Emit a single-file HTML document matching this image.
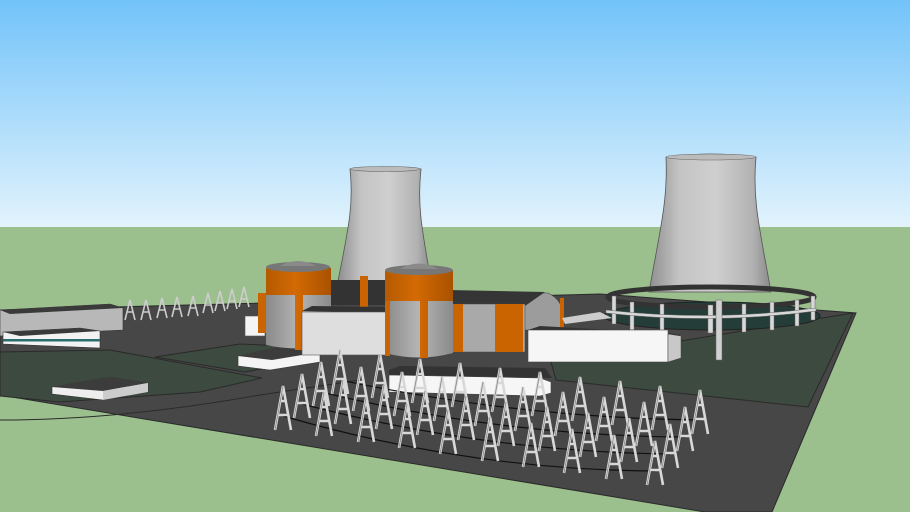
<!DOCTYPE html>
<html><head><meta charset="utf-8"><style>html,body{margin:0;padding:0;overflow:hidden}svg{display:block}</style></head>
<body>
<svg width="910" height="512" viewBox="0 0 910 512" xmlns="http://www.w3.org/2000/svg">
<defs>
<linearGradient id="sky" x1="0" y1="0" x2="0" y2="1"><stop offset="0" stop-color="#72c3fa"/><stop offset="1" stop-color="#e2f3fc"/></linearGradient>
<linearGradient id="tw" x1="0" y1="0" x2="1" y2="0"><stop offset="0" stop-color="#8e8e8e"/><stop offset="0.25" stop-color="#c4c4c4"/><stop offset="0.55" stop-color="#cfcfcf"/><stop offset="0.85" stop-color="#b2b2b2"/><stop offset="1" stop-color="#888"/></linearGradient>
<linearGradient id="cy" x1="0" y1="0" x2="1" y2="0"><stop offset="0" stop-color="#8a8a8a"/><stop offset="0.5" stop-color="#b5b5b5"/><stop offset="1" stop-color="#8a8a8a"/></linearGradient>
<linearGradient id="or" x1="0" y1="0" x2="1" y2="0"><stop offset="0" stop-color="#b45a00"/><stop offset="0.45" stop-color="#d46a04"/><stop offset="1" stop-color="#a85200"/></linearGradient>
<g id="py"><path d="M-8,0 L0,-44 L8,0 M-5,-15 L5,-15 M-2,-29 L2,-29" stroke="#d8d8d8" stroke-width="2.6" fill="none"/><path d="M-8,0 L0,-44" stroke="#8a8a8a" stroke-width="0.8" fill="none"/></g>
<g id="ps"><path d="M-5,0 L0,-20 L5,0 M-3,-8 L3,-8" stroke="#ccc" stroke-width="1.6" fill="none"/></g>
</defs>
<rect width="910" height="227" fill="url(#sky)"/>
<rect y="227" width="910" height="285" fill="#9bc08e"/>
<!-- slab -->
<polygon points="0,310 600,294 856,313 772,512 705,512 0,395" fill="#474747" stroke="#2a2a2a" stroke-width="1"/>
<polygon points="0,352 110,350 262,378 200,392 60,402 0,396" fill="#3d4a3f" stroke="#2a2a2a"/>
<polygon points="155,357 240,344 330,348 300,362 245,372" fill="#3d4a3f" stroke="#2a2a2a"/>
<polygon points="551,362 853,313 808,407 556,380" fill="#3d4a3f" stroke="#2a2a2a"/>
<path d="M0,420 Q120,420 260,395 L360,380" stroke="#2a2a2a" fill="none"/>
<!-- back pylons -->
<g>
<use href="#ps" x="130" y="320"/><use href="#ps" x="146" y="320"/><use href="#ps" x="162" y="318"/><use href="#ps" x="177" y="317"/><use href="#ps" x="193" y="316"/><use href="#ps" x="208" y="313"/><use href="#ps" x="220" y="311"/><use href="#ps" x="232" y="309"/><use href="#ps" x="244" y="307"/>
</g>
<!-- right cooling tower platform -->
<ellipse cx="712" cy="316" rx="108" ry="14" fill="#253d38" stroke="#222"/>
<path d="M649,292 C660,230 668,200 666,157 Q711,151 756,157 C752,200 760,230 771,292 Z" fill="url(#tw)" stroke="#555" stroke-width="0.8"/>
<ellipse cx="711" cy="157" rx="45" ry="3" fill="#bbb" stroke="#666" stroke-width="0.6"/>
<ellipse cx="711" cy="297" rx="103" ry="10" fill="none" stroke="#333" stroke-width="5"/>
<g fill="#d8d8d8" stroke="#666" stroke-width="0.5">
<rect x="612" y="296" width="4" height="28"/><rect x="630" y="302" width="4" height="28"/><rect x="660" y="304" width="4" height="28"/><rect x="708" y="305" width="5" height="28"/><rect x="742" y="304" width="4" height="28"/><rect x="770" y="302" width="4" height="28"/><rect x="795" y="300" width="4" height="26"/><rect x="811" y="296" width="4" height="24"/>
<path d="M606,310 Q711,322 816,308 L816,311 Q711,325 606,313 Z"/>
</g>
<rect x="716" y="300" width="6" height="60" fill="#d0d0d0" stroke="#666" stroke-width="0.5"/>
<!-- left cooling tower -->
<path d="M338,281 C348,230 354,205 350,169 Q385,165 421,169 C417,205 422,230 431,281 Z" fill="url(#tw)" stroke="#555" stroke-width="0.8"/>
<ellipse cx="385" cy="169" rx="35" ry="2.5" fill="#bbb" stroke="#666" stroke-width="0.6"/>
<!-- left buildings -->
<polygon points="0,310 110,304 123,308 123,330 0,336" fill="#b8b8b8" stroke="#333" stroke-width="0.6"/>
<polygon points="0,310 110,304 123,308 10,314" fill="#3a3a3a"/>
<polygon points="3,332 80,328 100,331 100,348 3,344" fill="#f2f2f2" stroke="#333" stroke-width="0.6"/>
<polygon points="3,332 80,328 100,331 20,336" fill="#3a3a3a"/>
<rect x="3" y="339" width="97" height="2.5" fill="#2b6c6c"/>
<polygon points="52,387 110,377 148,383 148,392 103,400 52,394" fill="#eee" stroke="#333" stroke-width="0.6"/>
<polygon points="52,387 110,377 148,383 103,391" fill="#3c3c3c"/>
<polygon points="103,391 148,383 148,392 103,400" fill="#ccc"/>
<!-- small building near reactor -->
<polygon points="238,356 285,346 320,352 320,362 270,370 238,366" fill="#f4f4f4" stroke="#333" stroke-width="0.6"/>
<polygon points="238,356 285,346 320,352 272,360" fill="#3c3c3c"/>
<rect x="245" y="316" width="20" height="20" fill="#f4f4f4" stroke="#555" stroke-width="0.6"/>
<!-- reactor complex -->
<rect x="330" y="280" width="60" height="25" fill="#333"/>
<rect x="258" y="293" width="12" height="40" fill="#c96400"/>
<path d="M266,268 Q298,258 331,268 L331,345 Q298,352 266,345 Z" fill="url(#cy)"/>
<path d="M266,268 Q298,258 331,268 L331,295 L303,295 L303,350 L295,350 L295,295 L266,295 Z" fill="url(#or)"/>
<ellipse cx="298" cy="267" rx="32" ry="5" fill="#777"/>
<path d="M280,266 Q298,256 316,266 Z" fill="#8a8a8a"/>
<rect x="360" y="276" width="8" height="35" fill="#c96400"/>
<!-- turbine hall -->
<path d="M522,293 L548,293 Q562,300 562,312 L562,330 L522,330 Z" fill="#9c9c9c" stroke="#444" stroke-width="0.6"/>
<polygon points="448,290 545,292 525,306 448,304" fill="#353535"/>
<rect x="448" y="304" width="77" height="48" fill="#a9a9a9" stroke="#444" stroke-width="0.5"/>
<rect x="450" y="304" width="13" height="48" fill="#c96400"/>
<rect x="495" y="304" width="28" height="48" fill="#c96400"/>
<rect x="560" y="298" width="4" height="30" fill="#c96400"/>
<!-- gray box -->
<polygon points="302,311 312,306 385,307 385,313" fill="#333"/>
<rect x="302" y="312" width="84" height="43" fill="#dedede" stroke="#555" stroke-width="0.6"/>
<!-- right reactor -->
<path d="M385,271 Q419,261 453,271 L453,353 Q419,362 385,353 Z" fill="url(#cy)"/>
<path d="M385,271 Q419,261 453,271 L453,301 L428,301 L428,358 L420,358 L420,301 L385,301 Z" fill="url(#or)"/>
<rect x="385" y="301" width="5" height="55" fill="#c96400"/>
<ellipse cx="419" cy="270" rx="34" ry="5" fill="#777"/>
<path d="M400,269 Q419,258 438,269 Z" fill="#8a8a8a"/>
<!-- connector -->
<polygon points="562,318 600,312 612,318 565,324" fill="#ccc"/>
<!-- right white building -->
<polygon points="528,330 540,326 668,333 681,335 668,338" fill="#333"/>
<rect x="528" y="330" width="140" height="32" fill="#f6f6f6" stroke="#444" stroke-width="0.6"/>
<polygon points="668,334 681,336 681,358 668,362" fill="#c8c8c8" stroke="#444" stroke-width="0.5"/>
<!-- substation building -->
<polygon points="389,370 400,366 545,368 552,378 389,376" fill="#333"/>
<polygon points="389,375 540,378 551,382 551,393 540,396 389,392" fill="#f6f6f6" stroke="#444" stroke-width="0.6"/>
<!-- wires -->
<g stroke="#111" stroke-width="1.2" fill="none">
<path d="M283,416 Q469,470 655,471"/><path d="M302,404 Q486,452 670,454"/><path d="M321,392 Q503,436 685,437"/><path d="M340,380 Q520,418 700,420"/>
</g>
<!-- pylons back to front -->
<g>
<use href="#py" x="340" y="394"/><use href="#py" x="380" y="398"/><use href="#py" x="420" y="403"/><use href="#py" x="460" y="407"/><use href="#py" x="500" y="412"/><use href="#py" x="540" y="416"/><use href="#py" x="580" y="421"/><use href="#py" x="620" y="425"/><use href="#py" x="660" y="430"/><use href="#py" x="700" y="434"/>
<use href="#py" x="321" y="406"/><use href="#py" x="361" y="411"/><use href="#py" x="402" y="416"/><use href="#py" x="442" y="421"/><use href="#py" x="483" y="426"/><use href="#py" x="523" y="431"/><use href="#py" x="563" y="436"/><use href="#py" x="604" y="441"/><use href="#py" x="644" y="446"/><use href="#py" x="685" y="451"/>
<use href="#py" x="302" y="418"/><use href="#py" x="343" y="424"/><use href="#py" x="384" y="429"/><use href="#py" x="425" y="435"/><use href="#py" x="466" y="440"/><use href="#py" x="506" y="446"/><use href="#py" x="547" y="451"/><use href="#py" x="588" y="457"/><use href="#py" x="629" y="462"/><use href="#py" x="670" y="468"/>
<use href="#py" x="283" y="430"/><use href="#py" x="324" y="436"/><use href="#py" x="366" y="442"/><use href="#py" x="407" y="448"/><use href="#py" x="448" y="454"/><use href="#py" x="490" y="461"/><use href="#py" x="531" y="467"/><use href="#py" x="572" y="473"/><use href="#py" x="614" y="479"/><use href="#py" x="655" y="485"/>
</g>
</svg>
</body></html>
